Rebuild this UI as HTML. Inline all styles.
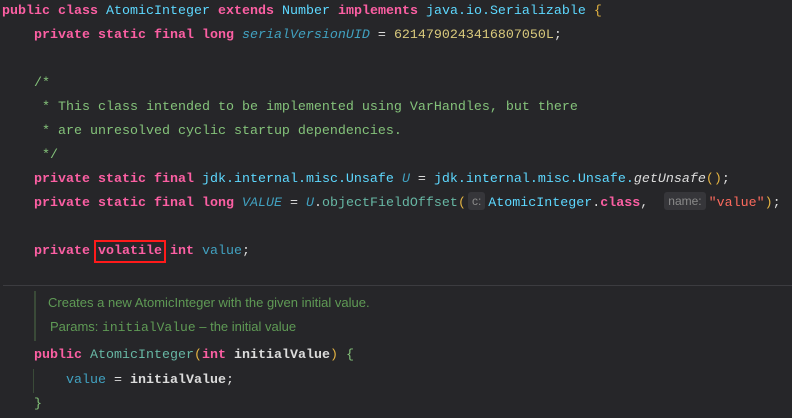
<!DOCTYPE html>
<html><head><meta charset="utf-8"><style>
html,body{margin:0;padding:0;background:#262629;width:792px;height:418px;overflow:hidden}
.c{position:absolute;left:2px;font-family:"Liberation Mono",monospace;font-size:13.33px;font-weight:bold;white-space:pre;color:#dcdcdc;line-height:24px;height:24px}
.k{color:#fc5fa3}.t{color:#5dd8ff;font-weight:normal}.cm{color:#84c27a;font-weight:normal}
.f{color:#41a1c0;font-style:italic;font-weight:normal}.n{color:#d9c97c;font-weight:normal}
.s{color:#fc6a5d;font-weight:normal}.p{color:#dcdcdc;font-weight:normal}.y{color:#e3b341;font-weight:normal}
.m{color:#67b7a4;font-weight:normal}.i{font-style:italic;color:#dcdcdc;font-weight:normal}
.v{color:#41a1c0;font-weight:normal}
.h{display:inline-block;background:#36363a;color:#8a8a8a;font-family:"Liberation Sans",sans-serif;font-weight:normal;font-size:12px;line-height:18px;border-radius:3px;padding:0 4px;vertical-align:1px;margin:0 3px 0 2px}
.d{position:absolute;left:48px;font-family:"Liberation Sans",sans-serif;font-size:13px;color:#5f9a55;white-space:pre}
</style></head><body>
<div class="c" style="top:0"><span class="k">public class </span><span class="t">AtomicInteger </span><span class="k">extends </span><span class="t">Number </span><span class="k">implements </span><span class="t">java.io.Serializable </span><span class="y">{</span></div>
<div class="c" style="top:24px">    <span class="k">private static final long </span><span class="f">serialVersionUID</span><span class="p"> = </span><span class="n">6214790243416807050L</span><span class="p">;</span></div>
<div class="c cm" style="top:72px">    /*</div>
<div class="c cm" style="top:96px">     * This class intended to be implemented using VarHandles, but there</div>
<div class="c cm" style="top:120px">     * are unresolved cyclic startup dependencies.</div>
<div class="c cm" style="top:144px">     */</div>
<div class="c" style="top:168px">    <span class="k">private static final </span><span class="t">jdk.internal.misc.Unsafe </span><span class="f">U</span><span class="p"> = </span><span class="t">jdk.internal.misc.Unsafe.</span><span class="i">getUnsafe</span><span class="y">()</span><span class="p">;</span></div>
<div class="c" style="top:192px">    <span class="k">private static final long </span><span class="f">VALUE</span><span class="p"> = </span><span class="f">U</span><span class="p">.</span><span class="m">objectFieldOffset</span><span class="y">(</span><span class="h">c:</span><span class="t">AtomicInteger</span><span class="p">.</span><span class="k">class</span><span class="p">, </span><span class="h" style="margin-left:8px">name:</span><span class="s">"value"</span><span class="y">)</span><span class="p">;</span></div>
<div class="c" style="top:240px">    <span class="k">private volatile int </span><span class="v">value</span><span class="p">;</span></div>
<div style="position:absolute;left:94px;top:240px;width:68px;height:19px;border:2px solid #ff1a1a"></div>
<div style="position:absolute;left:3px;right:0;top:285px;height:1px;background:#3c3c40"></div>
<div style="position:absolute;left:34px;top:291px;width:2px;height:50px;background:#3a4a38"></div>
<div class="d" style="top:295px">Creates a new AtomicInteger with the given initial value.</div>
<div class="d" style="top:319px;left:50px">Params: <span style="font-family:'Liberation Mono',monospace">initialValue</span> – the initial value</div>
<div class="c" style="top:344px">    <span class="k">public </span><span class="m">AtomicInteger</span><span class="y">(</span><span class="k">int </span>initialValue<span class="y">)</span> <span class="cm">{</span></div>
<div style="position:absolute;left:33px;top:369px;width:1px;height:24px;background:#3a4a38"></div>
<div class="c" style="top:369px">        <span class="v">value</span><span class="p"> = </span>initialValue<span class="p">;</span></div>
<div class="c cm" style="top:393px">    }</div>
</body></html>
